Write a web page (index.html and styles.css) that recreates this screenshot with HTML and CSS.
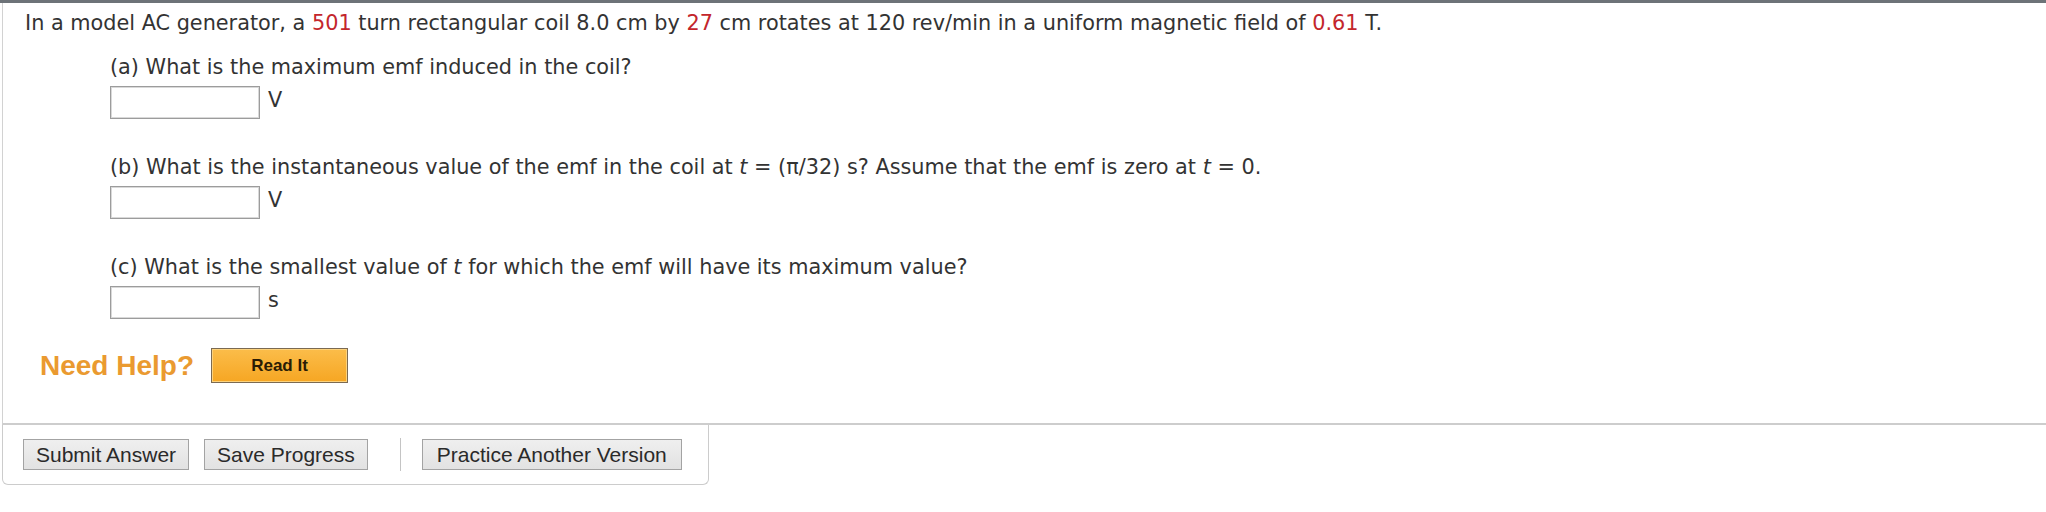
FILE: index.html
```html
<!DOCTYPE html>
<html lang="en">
<head>
<meta charset="utf-8">
<title>AC generator question</title>
<link rel="stylesheet" href="styles.css">
</head>
<body>
<div class="page">
  <div class="panel">
    <p class="stem">In a model AC generator, a <span class="num">501</span> turn rectangular coil 8.0 cm by <span class="num">27</span> cm rotates at 120 rev/min in a uniform magnetic field of <span class="num">0.61</span> T.</p>
    <div class="parts">
      <div class="part">
        <p class="prompt">(a) What is the maximum emf induced in the coil?</p>
        <div class="answer"><input class="field" type="text"><span class="unit">V</span></div>
      </div>
      <div class="part">
        <p class="prompt">(b) What is the instantaneous value of the emf in the coil at <i>t</i> = (π/32) s? Assume that the emf is zero at <i>t</i> = 0.</p>
        <div class="answer"><input class="field" type="text"><span class="unit">V</span></div>
      </div>
      <div class="part">
        <p class="prompt">(c) What is the smallest value of <i>t</i> for which the emf will have its maximum value?</p>
        <div class="answer"><input class="field" type="text"><span class="unit">s</span></div>
      </div>
    </div>
    <div class="help">
      <span class="help-label">Need Help?</span>
      <button class="read-it" type="button">Read It</button>
    </div>
  </div>
  <div class="actions">
    <button class="btn" type="button">Submit Answer</button>
    <button class="btn" type="button">Save Progress</button>
    <span class="divider"></span>
    <button class="btn btn-wide" type="button">Practice Another Version</button>
  </div>
</div>
</body>
</html>
```
FILE: styles.css
```css
html, body {
  margin: 0;
  padding: 0;
  background: #ffffff;
}

.page {
  border-top: 3px solid #6d7378;
  font-family: "DejaVu Sans", Verdana, sans-serif;
  color: #333333;
}

.panel {
  margin-left: 2px;
  border-left: 1px solid #d2d2d2;
  border-bottom: 2px solid #cdcdcd;
  padding: 8px 0 40px 22px;
}

.stem,
.prompt {
  margin: 0;
  font-size: 20.8px;
  line-height: 24px;
}

.num {
  color: #c3262c;
}

.parts {
  margin-left: 85px;
}

.part {
  margin-top: 36px;
}

.part:first-child {
  margin-top: 20px;
}

.answer {
  margin-top: 7px;
  display: flex;
  align-items: center;
  gap: 8px;
}

.field {
  box-sizing: border-box;
  width: 150px;
  height: 33px;
  margin: 0;
  border: 1px solid #9c9c9c;
  box-shadow: inset 0 0 0 1px #d9d9d9;
  background: #ffffff;
}

.unit {
  font-size: 20.8px;
  line-height: 24px;
  margin-top: -5px;
}

.help {
  margin-top: 29px;
  margin-left: 15px;
  height: 35px;
  display: flex;
  align-items: center;
  gap: 17px;
}

.help-label {
  font-family: "Liberation Sans", Arial, sans-serif;
  font-weight: bold;
  font-size: 28px;
  line-height: 32px;
  color: #ea9a30;
}

.read-it {
  box-sizing: border-box;
  width: 137px;
  height: 35px;
  margin: 0;
  padding: 0;
  border: 1px solid #7b6a52;
  box-shadow: inset 0 0 0 1px #fcd27c;
  background: linear-gradient(#fbbd4a, #f6a623);
  font-family: "Liberation Sans", Arial, sans-serif;
  font-weight: bold;
  font-size: 17px;
  color: #2a1c05;
}

.actions {
  box-sizing: border-box;
  width: 707px;
  margin-left: 2px;
  padding: 13px 0 13px 20px;
  border: 1px solid #cccccc;
  border-top: none;
  border-radius: 0 0 6px 6px;
  display: flex;
  align-items: center;
}

.btn {
  box-sizing: border-box;
  height: 31px;
  margin: 0 15px 0 0;
  padding: 0 12px;
  border: 1px solid #a3a3a3;
  background: linear-gradient(#efefef, #e2e2e2);
  font-family: "Liberation Sans", Arial, sans-serif;
  font-size: 21px;
  line-height: 23px;
  color: #2a2a2a;
}

.btn-wide {
  padding: 0 14px;
}

.divider {
  width: 1px;
  height: 33px;
  background: #c4c4c4;
  margin: 0 21px 0 17px;
}
```
